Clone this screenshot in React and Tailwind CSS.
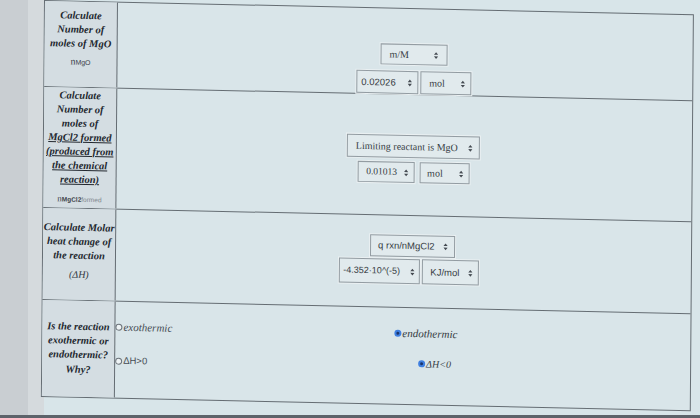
const serif = "font-['Liberation_Serif','Times_New_Roman',serif]";
const sans = "font-['Liberation_Sans',Arial,sans-serif]";

const Arrows = () => (
  <svg width="5" height="8" viewBox="0 0 5 8" className="shrink-0">
    <path d="M2.5 0.6 L4.6 3.2 H0.4 Z M2.5 7.4 L0.4 4.8 H4.6 Z" fill="#454b52" />
  </svg>
);

const Select = ({ label, className }) => (
  <div
    className={`flex items-center justify-between border border-[#939ca2] bg-[#e1eaed] text-[#363c43] shadow-[0_0_0_1px_#eaf0f2] ${className}`}
  >
    <span className="whitespace-nowrap leading-none">{label}</span>
    <Arrows />
  </div>
);

const Radio = ({ checked }) =>
  checked ? (
    <span className="flex h-[7px] w-[7px] shrink-0 items-center justify-center rounded-full bg-[#3f7fe0]">
      <span className="h-[3px] w-[3px] rounded-full bg-[#1b356b]" />
    </span>
  ) : (
    <span className="h-[7px] w-[7px] shrink-0 rounded-full border border-[#6d747b] bg-[#eef3f5]" />
  );

const Label = ({ children, className = "" }) => (
  <div
    className={`flex w-[73px] shrink-0 flex-col items-center border-r border-[#656d73] bg-[#d4dde2] text-center text-[10.5px] font-bold italic leading-[14px] text-[#23282f] ${serif} ${className}`}
  >
    {children}
  </div>
);

export default function App() {
  return (
    <div className="flex h-[418px] w-[700px] flex-col overflow-hidden bg-[#d8e5e9]">
      <div className="flex flex-1">
        <div className="w-[28px] bg-[#c9ced2]" />
        <div className="w-[16px] bg-[#d5dadd]" />

        <div className="h-[397px] w-[650px] origin-top-left skew-x-[-0.45deg] skew-y-[1.25deg] border border-[#656d73] bg-[#d9e5e9]">
          {/* row 1 */}
          <div className="flex h-[86px] border-b border-[#656d73]">
            <Label className="pt-[7px]">
              <span>Calculate</span>
              <span>Number of</span>
              <span>moles of MgO</span>
              <span className="mt-[4px] text-[10px] font-normal not-italic text-[#3d434a]">
                n<span className={`text-[7px] ${sans}`}>MgO</span>
              </span>
            </Label>
            <div className={`flex flex-1 flex-col items-center gap-[6px] pl-[18px] pt-[35px] text-[10px] ${serif}`}>
              <Select label="m/M" className="h-[22px] w-[67px] pl-[8px] pr-[8px]" />
              <div className="flex gap-[2px]">
                <Select label="0.02026" className={`h-[23px] w-[62px] pl-[4px] pr-[5px] text-[9.5px] ${sans}`} />
                <Select label="mol" className="h-[23px] w-[51px] pl-[8px] pr-[5px]" />
              </div>
            </div>
          </div>

          {/* row 2 */}
          <div className="flex h-[121px] border-b border-[#656d73]">
            <Label className="pt-[1px]">
              <span>Calculate</span>
              <span>Number of</span>
              <span>moles of</span>
              <span className="underline decoration-1 underline-offset-1">MgCl2 formed</span>
              <span className="underline decoration-1 underline-offset-1">(produced from</span>
              <span className="underline decoration-1 underline-offset-1">the chemical</span>
              <span className="underline decoration-1 underline-offset-1">reaction)</span>
              <span className="mt-[5px] text-[9px] font-normal not-italic text-[#3d434a]">
                n
                <span className={`text-[6.5px] font-bold ${sans}`}>MgCl2</span>
                <span className={`text-[6.5px] text-[#7d858c] ${sans}`}>formed</span>
              </span>
            </Label>
            <div className={`flex flex-1 flex-col items-center gap-[4px] pl-[18px] pt-[40px] text-[10px] ${serif}`}>
              <Select label="Limiting reactant is MgO" className="h-[23px] w-[133px] pl-[8px] pr-[6px]" />
              <div className="flex gap-[5px]">
                <Select label="0.01013" className="h-[21px] w-[57px] pl-[8px] pr-[5px] text-[9.5px]" />
                <Select label="mol" className="h-[21px] w-[50px] pl-[7px] pr-[5px]" />
              </div>
            </div>
          </div>

          {/* row 3 */}
          <div className="flex h-[92px] border-b border-[#656d73]">
            <Label className="pt-[12px]">
              <span className="whitespace-nowrap">Calculate Molar</span>
              <span>heat change of</span>
              <span>the reaction</span>
              <span className="mt-[5px] text-[10px] font-normal text-[#30363d]">(ΔH)</span>
            </Label>
            <div className={`flex flex-1 flex-col items-center gap-[2px] pl-[18px] pt-[19px] text-[9.5px] ${sans}`}>
              <Select label="q rxn/nMgCl2" className="h-[22px] w-[85px] pl-[7px] pr-[6px]" />
              <div className="flex gap-[2px] pr-[8px]">
                <Select label="-4.352·10^(-5)" className="h-[25px] w-[81px] pl-[4px] pr-[4px] text-[9px]" />
                <Select label="KJ/mol" className="h-[25px] w-[57px] pl-[8px] pr-[5px]" />
              </div>
            </div>
          </div>

          {/* row 4 */}
          <div className="flex h-[96px]">
            <Label className="pt-[19px]">
              <span className="whitespace-nowrap">Is the reaction</span>
              <span>exothermic or</span>
              <span>endothermic?</span>
              <span className="mt-[1px]">Why?</span>
            </Label>
            <div className="flex flex-1">
              <div className="flex w-[279px] flex-col pt-[19px]">
                <label className={`flex h-[12px] items-center gap-[1px] text-[11px] italic text-[#474d55] ${serif}`}>
                  <Radio />
                  exothermic
                </label>
                <label className={`mt-[22px] flex h-[12px] items-center gap-[1px] text-[9.5px] text-[#474d55] ${sans}`}>
                  <Radio />
                  ΔH&gt;0
                </label>
              </div>
              <div className="flex flex-col pt-[19px]">
                <label className={`flex h-[12px] items-center gap-[1px] text-[11px] italic text-[#353b42] ${serif}`}>
                  <Radio checked />
                  endothermic
                </label>
                <label className={`ml-[24px] mt-[18px] flex h-[12px] items-center gap-[1px] text-[10px] italic text-[#353b42] ${serif}`}>
                  <Radio checked />
                  ΔH&lt;0
                </label>
              </div>
            </div>
          </div>
        </div>
      </div>
      <div className="h-[3px] bg-[#5d636a]" />
    </div>
  );
}
